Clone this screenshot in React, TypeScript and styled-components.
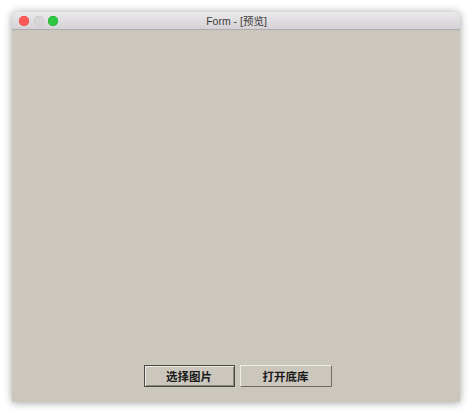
import styled, { createGlobalStyle } from "styled-components";

const GlobalStyle = createGlobalStyle`
  html, body {
    margin: 0;
    padding: 0;
    background: #ffffff;
  }
  body {
    font-family: "Liberation Sans", "Noto Sans CJK SC", Arial, sans-serif;
  }
`;

const Stage = styled.div`
  width: 474px;
  height: 415px;
  padding: 12px 14px 13px 12px;
  box-sizing: border-box;
`;

const Window = styled.div`
  width: 448px;
  height: 390px;
  display: flex;
  flex-direction: column;
  background: #cbc7bd;
  box-shadow: 0 0 10px rgba(0, 0, 0, 0.28), 0 2px 6px rgba(0, 0, 0, 0.12);
  border-radius: 5px 5px 0 0;
  overflow: hidden;
`;

const TitleBar = styled.div`
  position: relative;
  height: 17px;
  flex: none;
  display: flex;
  align-items: center;
  justify-content: center;
  background: linear-gradient(#ebe9eb, #d4d2d4);
  border-bottom: 1px solid #aeacae;
`;

const Lights = styled.div`
  position: absolute;
  left: 7px;
  top: 4px;
  display: flex;
  gap: 4.5px;
`;

const Light = styled.span<{ $color: string; $edge: string }>`
  width: 10px;
  height: 10px;
  border-radius: 50%;
  background: ${(p) => p.$color};
  box-shadow: inset 0 0 0 0.5px ${(p) => p.$edge};
`;

const Title = styled.span`
  font-family: "Liberation Sans", "Noto Sans CJK SC", sans-serif;
  font-size: 10.5px;
  color: #3a3a3a;
  padding-left: 1px;
`;

const Content = styled.div`
  flex: 1;
  display: flex;
  align-items: flex-end;
  justify-content: center;
  padding: 0 0 15px 3px;
`;

const ButtonRow = styled.div`
  display: flex;
  gap: 5px;
`;

const Button = styled.button<{ $focused?: boolean }>`
  width: ${(p) => (p.$focused ? "91px" : "92px")};
  height: 22px;
  padding: 0;
  box-sizing: border-box;
  font-family: "Noto Sans CJK SC", sans-serif;
  font-size: 11.5px;
  font-weight: 700;
  color: #1a1a1a;
  background: #cbc7bd;
  cursor: pointer;
  border: 1px solid;
  border-color: #efede8 #6e6b66 #6e6b66 #efede8;
  ${(p) =>
    p.$focused &&
    `
    border: 1px solid #4a4844;
    box-shadow: inset 1px 1px 0 #efede8, inset -1px -1px 0 #8a8781;
  `}
`;

export default function App() {
  return (
    <>
      <GlobalStyle />
      <Stage>
        <Window>
          <TitleBar>
            <Lights>
              <Light $color="#fc5b57" $edge="#de4542" />
              <Light $color="#d8d6d8" $edge="#c2c0c2" />
              <Light $color="#2bc840" $edge="#1fa42f" />
            </Lights>
            <Title>Form - [预览]</Title>
          </TitleBar>
          <Content>
            <ButtonRow>
              <Button $focused>选择图片</Button>
              <Button>打开底库</Button>
            </ButtonRow>
          </Content>
        </Window>
      </Stage>
    </>
  );
}
